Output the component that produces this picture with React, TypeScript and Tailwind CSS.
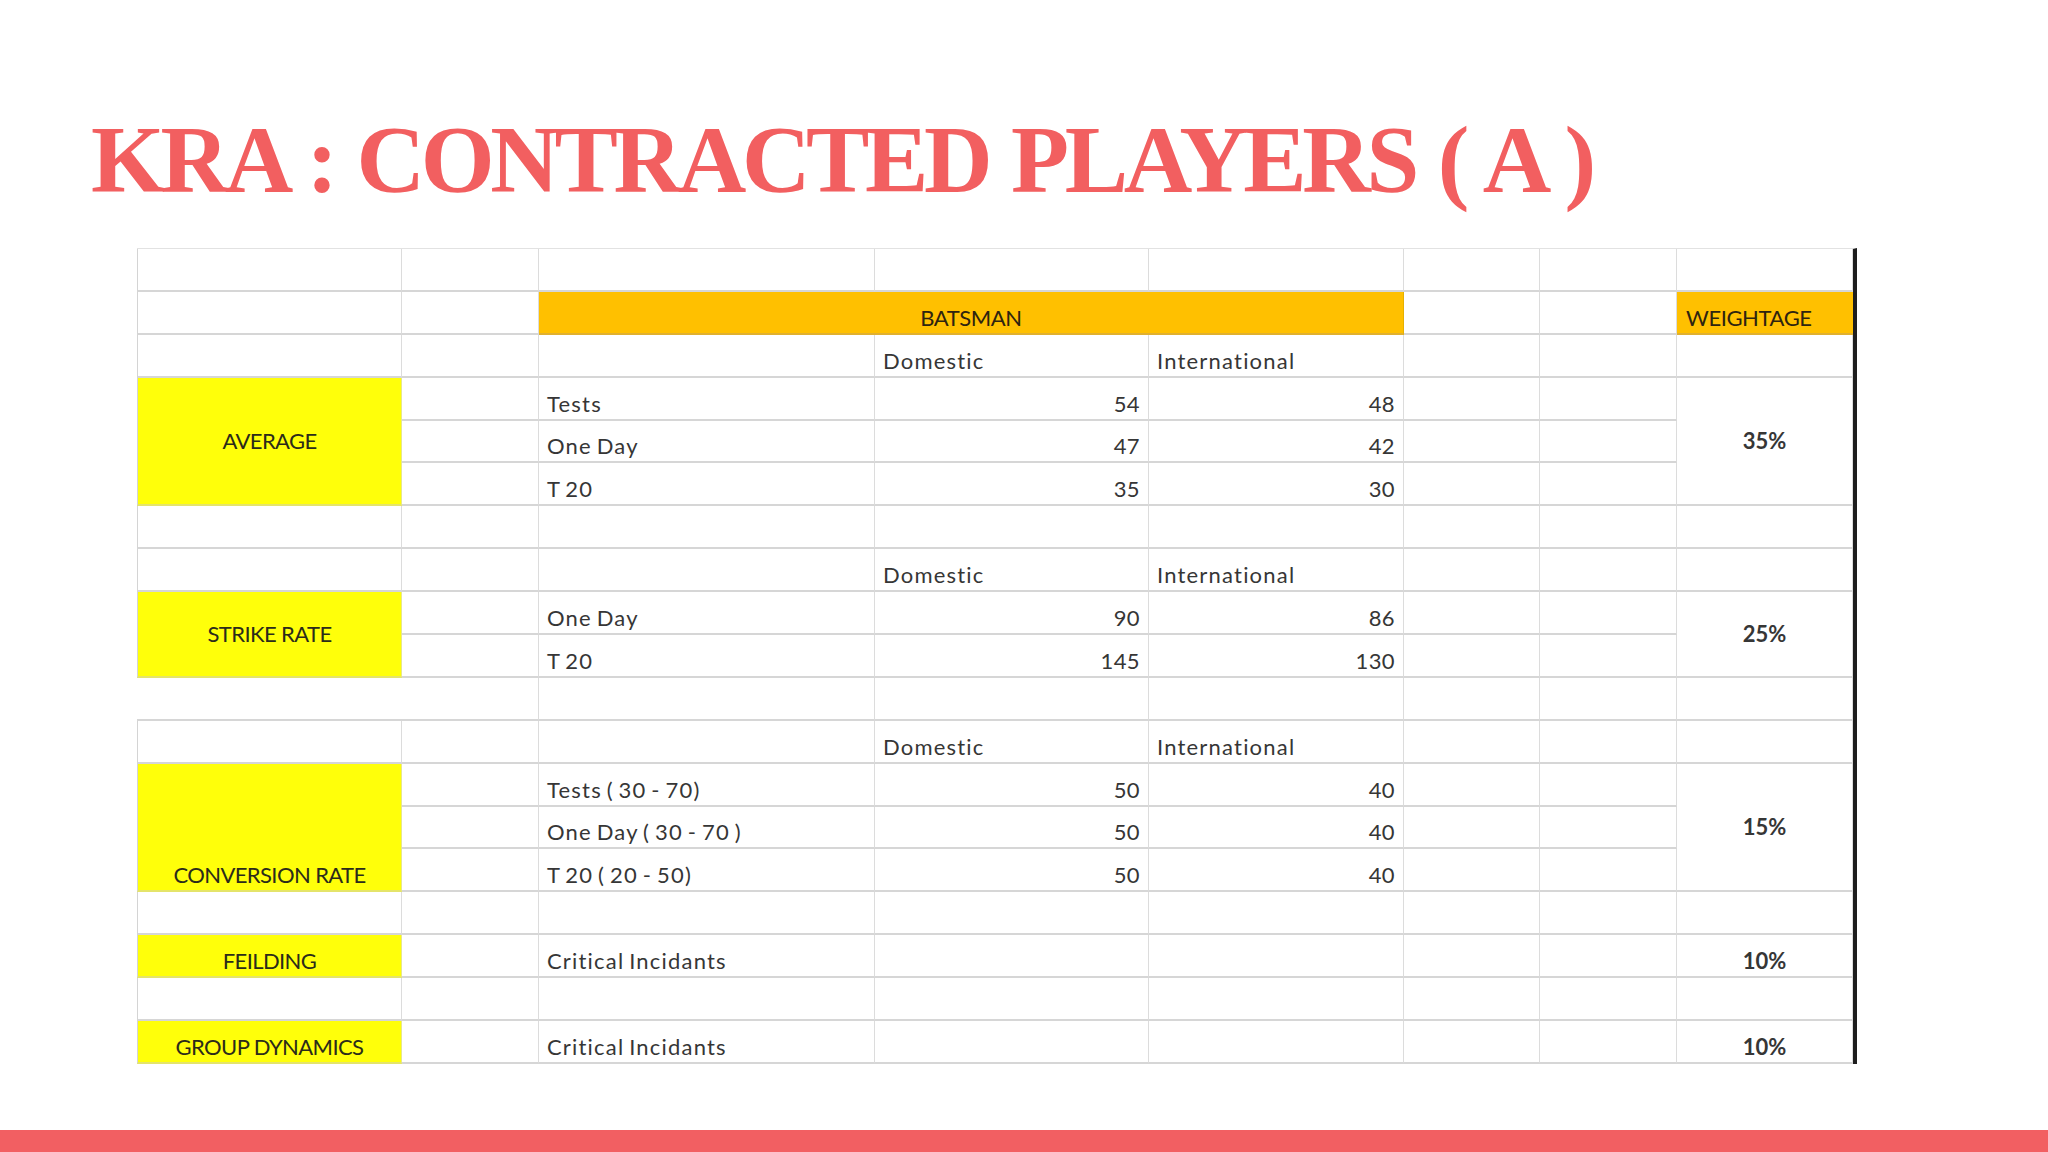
import { twMerge } from "tailwind-merge";
import type { ReactNode } from "react";

const Cell = ({
  children,
  className = "",
}: {
  children?: ReactNode;
  className?: string;
}) => (
  <div
    className={twMerge(
      "flex items-end border-r border-r-[#dcdcdc] border-b-2 border-b-[#d6d6d6] px-[8px] pb-[1px] text-[22px] leading-[28px] tracking-[1.2px] [word-spacing:-2px] text-[#363636] whitespace-nowrap",
      className
    )}
  >
    {children}
  </div>
);

// first column cells carry the table's left edge
const First = ({
  children,
  className = "",
}: {
  children?: ReactNode;
  className?: string;
}) => <Cell className={twMerge("border-l border-l-[#d4d4d4]", className)}>{children}</Cell>;

const Label = ({
  children,
  className = "",
}: {
  children: ReactNode;
  className?: string;
}) => (
  <First
    className={twMerge(
      "bg-[#ffff0a] justify-center tracking-[-0.6px] [word-spacing:0px] text-[#2b2b1a] border-r-[#e8e88a] border-b-[#e4e46a]",
      className
    )}
  >
    {children}
  </First>
);

const Num = ({ children }: { children: ReactNode }) => (
  <Cell className="justify-end tracking-[0.4px]">{children}</Cell>
);

const Pct = ({
  children,
  className = "",
}: {
  children: ReactNode;
  className?: string;
}) => (
  <Cell className={twMerge("justify-center font-bold tracking-normal", className)}>
    {children}
  </Cell>
);

const Empty = ({ n }: { n: number }) => (
  <>
    {Array.from({ length: n }).map((_, i) => (
      <Cell key={i} />
    ))}
  </>
);

const HeadRow = () => (
  <>
    <First />
    <Empty n={2} />
    <Cell>Domestic</Cell>
    <Cell>International</Cell>
    <Empty n={3} />
  </>
);

const BlankRow = () => (
  <>
    <First />
    <Empty n={7} />
  </>
);

const App = () => {
  return (
    <div className="w-[2048px] h-[1152px] bg-white flex flex-col overflow-hidden">
      <h1
        className="pt-[113px] pl-[91px] text-[95px] leading-none font-bold tracking-[-4.4px] [word-spacing:3.5px] text-[#f25f60] whitespace-nowrap"
        style={{ fontFamily: '"Liberation Serif", "Times New Roman", serif' }}
      >
        KRA : CONTRACTED PLAYERS ( A )
      </h1>

      <div className="mt-[40px] ml-[137px] flex">
        <div
          className="grid grid-cols-[265px_137px_336px_274px_255px_136px_137px_176px] grid-rows-[repeat(19,42.9px)] border-t border-t-[#e2e2e2] border-r-4 border-r-[#1e1e1e]"
          style={{ fontFamily: "Lato, Carlito, Calibri, sans-serif" }}
        >
          {/* row 0 */}
          <BlankRow />

          {/* row 1 */}
          <First />
          <Cell />
          <Cell className="col-span-3 bg-[#ffc000] justify-center tracking-[-0.4px] text-[#2e2410] border-r-[#e6b000] border-b-[#e0b030]">
            BATSMAN
          </Cell>
          <Empty n={2} />
          <Cell className="bg-[#ffc000] text-[#2e2410] px-[9px] tracking-[-0.4px] border-r-0 border-b-[#e0b030]">
            WEIGHTAGE
          </Cell>

          {/* row 2 */}
          <HeadRow />

          {/* average */}
          <Label className="row-span-3 items-center pb-0">AVERAGE</Label>
          <Cell />
          <Cell>Tests</Cell>
          <Num>54</Num>
          <Num>48</Num>
          <Empty n={2} />
          <Pct className="row-span-3 items-center pb-0">35%</Pct>

          <Cell />
          <Cell>One Day</Cell>
          <Num>47</Num>
          <Num>42</Num>
          <Empty n={2} />

          <Cell />
          <Cell>T 20</Cell>
          <Num>35</Num>
          <Num>30</Num>
          <Empty n={2} />

          <BlankRow />
          <HeadRow />

          {/* strike rate */}
          <Label className="row-span-2 items-center pb-0">STRIKE RATE</Label>
          <Cell />
          <Cell>One Day</Cell>
          <Num>90</Num>
          <Num>86</Num>
          <Empty n={2} />
          <Pct className="row-span-2 items-center pb-0">25%</Pct>

          <Cell />
          <Cell>T 20</Cell>
          <Num>145</Num>
          <Num>130</Num>
          <Empty n={2} />

          {/* gap row, no edge on the left */}
          <Cell className="border-r-0" />
          <Empty n={7} />

          <HeadRow />

          {/* conversion rate */}
          <Label className="row-span-3">CONVERSION RATE</Label>
          <Cell />
          <Cell>Tests ( 30 - 70)</Cell>
          <Num>50</Num>
          <Num>40</Num>
          <Empty n={2} />
          <Pct className="row-span-3 items-center pb-0">15%</Pct>

          <Cell />
          <Cell>One Day ( 30 - 70 )</Cell>
          <Num>50</Num>
          <Num>40</Num>
          <Empty n={2} />

          <Cell />
          <Cell>T 20 ( 20 - 50)</Cell>
          <Num>50</Num>
          <Num>40</Num>
          <Empty n={2} />

          <BlankRow />

          {/* fielding */}
          <Label>FEILDING</Label>
          <Cell />
          <Cell>Critical Incidants</Cell>
          <Empty n={4} />
          <Pct>10%</Pct>

          <BlankRow />

          {/* group dynamics */}
          <Label>GROUP DYNAMICS</Label>
          <Cell />
          <Cell>Critical Incidants</Cell>
          <Empty n={4} />
          <Pct>10%</Pct>
        </div>
      </div>

      <div className="mt-auto h-[22px] bg-[#f25f62]" />
    </div>
  );
};

export default App;
